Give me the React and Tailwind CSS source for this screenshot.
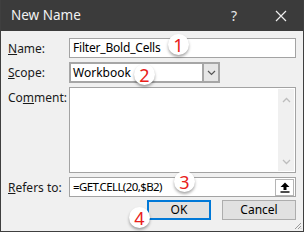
import React from 'react';

const font = { fontFamily: '"Noto Sans", "Open Sans", sans-serif' };

function Badge({ n, className }) {
  return (
    <div
      className={`absolute w-[21px] h-[21px] rounded-full bg-white flex items-center justify-center text-[18px] leading-none text-[#e8201a] shadow-[0_2px_3px_rgba(0,0,0,0.35)] ${className}`}
    >
      {n}
    </div>
  );
}

function Label({ children }) {
  return <div className="w-[61px] pt-[2px] text-[12px] text-[#1a1a1a]">{children}</div>;
}

function Chevron({ up }) {
  return (
    <svg width="9" height="6" viewBox="0 0 9 6">
      <path d={up ? 'M1 5 L4.5 1.5 L8 5' : 'M1 1 L4.5 4.5 L8 1'} fill="none" stroke="#bdbdbd" strokeWidth="1.3" />
    </svg>
  );
}

export default function App() {
  return (
    <div className="relative w-[304px] h-[232px] flex flex-col bg-[#f0f0f0] border-x border-b border-[#3f3f3f] overflow-hidden" style={font}>
      {/* title bar */}
      <div className="h-[31px] -mx-px bg-[#3b3b3b] flex items-center pl-[11px] pr-[17px] text-white">
        <span className="text-[13.5px] text-[#f2f2f2]">New Name</span>
        <span className="ml-auto mr-[38px] text-[14px] text-[#e8e8e8]">?</span>
        <svg width="12" height="12" viewBox="0 0 12 12">
          <path d="M1 1 L11 11 M11 1 L1 11" stroke="#eeeeee" strokeWidth="1.2" />
        </svg>
      </div>

      <div className="flex flex-col pl-[7px] pr-[6px] pt-[7px] gap-[4px]">
        {/* Name */}
        <div className="flex">
          <Label><span className="underline">N</span>ame:</Label>
          <div className="w-[227px] h-[20px] bg-white border border-[#a3a3a3] flex items-center pl-[3px] text-[12px] tracking-[-0.2px] text-black">
            Filter_Bold_Cells
          </div>
        </div>

        {/* Scope */}
        <div className="flex">
          <Label><span className="underline">S</span>cope:</Label>
          <div className="w-[151px] h-[21px] bg-white border-2 border-[#a6a6a6] flex">
            <div className="flex-1 flex items-center pl-[2px] text-[12px] text-black">Workbook</div>
            <div className="w-[16px] bg-[#e6e6e6] border-l-2 border-[#a6a6a6] flex items-center justify-center">
              <svg width="9" height="6" viewBox="0 0 9 6">
                <path d="M1 1 L4.5 4.5 L8 1" fill="none" stroke="#555" strokeWidth="1.2" />
              </svg>
            </div>
          </div>
        </div>

        {/* Comment */}
        <div className="flex">
          <Label>Co<span className="underline">m</span>ment:</Label>
          <div className="w-[227px] h-[86px] bg-white border border-[#a3a3a3] flex justify-end pr-px py-px">
            <div className="w-[16px] bg-[#f0f0f0] flex flex-col items-center justify-between pt-[8px] pb-[6px]">
              <Chevron up />
              <Chevron />
            </div>
          </div>
        </div>

        {/* Refers to */}
        <div className="flex">
          <Label><span className="underline">R</span>efers to:</Label>
          <div className="w-[227px] h-[20px] bg-white border border-[#a3a3a3] flex items-center">
            <div className="flex-1 pl-[3px] text-[11.5px] tracking-[-0.6px] text-black">=GET.CELL(20,$B2)</div>
            <div className="w-[19px] h-[17px] mr-px border border-[#b5b5b5] bg-white flex items-center justify-center">
              <svg width="10" height="11" viewBox="0 0 10 11">
                <path d="M5 0.5 L9.5 5 L6.5 5 L6.5 8 L3.5 8 L3.5 5 L0.5 5 Z" fill="#000" />
                <rect x="0.5" y="9.3" width="9" height="1.4" fill="#000" />
              </svg>
            </div>
          </div>
        </div>

        {/* buttons */}
        <div className="flex justify-end gap-[11px] pr-px mt-[-1px]">
          <div className="w-[64px] h-[20px] bg-[#e1e1e1] border-2 border-[#0078d7] flex items-center justify-center text-[12px] text-black">
            OK
          </div>
          <div className="w-[74px] h-[20px] bg-[#e1e1e1] border border-[#adadad] flex items-center justify-center text-[12px] text-black">
            Cancel
          </div>
        </div>
      </div>

      {/* resize grip */}
      <svg className="absolute right-[1px] bottom-[1px]" width="8" height="8" viewBox="0 0 8 8">
        <path d="M7 1 L1 7 M7 4 L4 7 M7 6.5 L6.5 7" stroke="#9a9a9a" strokeWidth="1" />
      </svg>

      <Badge n="1" className="left-[167px] top-[34px]" />
      <Badge n="2" className="left-[133px] top-[64px]" />
      <Badge n="3" className="left-[173px] top-[171px]" />
      <Badge n="4" className="left-[128px] top-[207px]" />
    </div>
  );
}
